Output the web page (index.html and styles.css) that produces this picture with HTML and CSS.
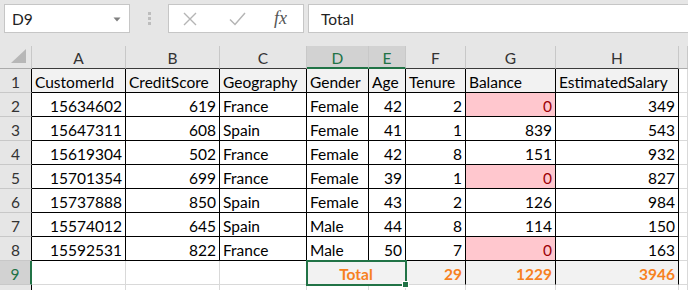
FILE: index.html
```html
<!DOCTYPE html>
<html lang="en">
<head>
    <meta charset="UTF-8">
    <title>Planilha</title>
    <link rel="stylesheet" href="styles.css">
</head>
<body>

    <!-- barra de fórmulas -->
    <div class="formula-bar">
        <div class="name-box">
            <span>D9</span>
            <svg width="8" height="5" viewBox="0 0 8 5"><path d="M0.5 0.5 L7.5 0.5 L4 4.5 Z" fill="#7f7f7f"/></svg>
        </div>
        <div class="grip"><i></i><i></i><i></i></div>
        <div class="fx-buttons">
            <svg class="icon-x" width="14" height="14" viewBox="0 0 14 14"><path d="M1 1 L13 13 M13 1 L1 13" stroke="#b5b5b5" stroke-width="1.4" fill="none"/></svg>
            <svg class="icon-ok" width="17" height="14" viewBox="0 0 17 14"><path d="M1 7.5 L6 12.5 L16 1" stroke="#b5b5b5" stroke-width="1.5" fill="none"/></svg>
            <span class="fx">fx</span>
        </div>
        <div class="formula-input">Total</div>
    </div>

    <!-- grade da planilha -->
    <div class="sheet">
        <div class="cell hdr corner"><svg width="16" height="15" viewBox="0 0 16 15"><path d="M15 0 L15 14 L0 14 Z" fill="#b7b7b7"/></svg></div>
        <div class="cell hdr top">A</div>
        <div class="cell hdr top">B</div>
        <div class="cell hdr top">C</div>
        <div class="cell hdr top sel-col">D</div>
        <div class="cell hdr top sel-col">E</div>
        <div class="cell hdr top">F</div>
        <div class="cell hdr top">G</div>
        <div class="cell hdr top">H</div>
        <div class="cell hdr"></div>

        <div class="cell rh">1</div>
        <div class="cell tb th1">CustomerId</div>
        <div class="cell tb th1">CreditScore</div>
        <div class="cell tb th1">Geography</div>
        <div class="cell tb th1">Gender</div>
        <div class="cell tb th1">Age</div>
        <div class="cell tb th1">Tenure</div>
        <div class="cell tb th1">Balance</div>
        <div class="cell tb th1">EstimatedSalary</div>
        <div class="cell"></div>

        <div class="cell rh">2</div>
        <div class="cell tb num">15634602</div>
        <div class="cell tb num">619</div>
        <div class="cell tb">France</div>
        <div class="cell tb">Female</div>
        <div class="cell tb num">42</div>
        <div class="cell tb num">2</div>
        <div class="cell tb num bad">0</div>
        <div class="cell tb num">349</div>
        <div class="cell"></div>

        <div class="cell rh">3</div>
        <div class="cell tb num">15647311</div>
        <div class="cell tb num">608</div>
        <div class="cell tb">Spain</div>
        <div class="cell tb">Female</div>
        <div class="cell tb num">41</div>
        <div class="cell tb num">1</div>
        <div class="cell tb num">839</div>
        <div class="cell tb num">543</div>
        <div class="cell"></div>

        <div class="cell rh">4</div>
        <div class="cell tb num">15619304</div>
        <div class="cell tb num">502</div>
        <div class="cell tb">France</div>
        <div class="cell tb">Female</div>
        <div class="cell tb num">42</div>
        <div class="cell tb num">8</div>
        <div class="cell tb num">151</div>
        <div class="cell tb num">932</div>
        <div class="cell"></div>

        <div class="cell rh">5</div>
        <div class="cell tb num">15701354</div>
        <div class="cell tb num">699</div>
        <div class="cell tb">France</div>
        <div class="cell tb">Female</div>
        <div class="cell tb num">39</div>
        <div class="cell tb num">1</div>
        <div class="cell tb num bad">0</div>
        <div class="cell tb num">827</div>
        <div class="cell"></div>

        <div class="cell rh">6</div>
        <div class="cell tb num">15737888</div>
        <div class="cell tb num">850</div>
        <div class="cell tb">Spain</div>
        <div class="cell tb">Female</div>
        <div class="cell tb num">43</div>
        <div class="cell tb num">2</div>
        <div class="cell tb num">126</div>
        <div class="cell tb num">984</div>
        <div class="cell"></div>

        <div class="cell rh">7</div>
        <div class="cell tb num">15574012</div>
        <div class="cell tb num">645</div>
        <div class="cell tb">Spain</div>
        <div class="cell tb">Male</div>
        <div class="cell tb num">44</div>
        <div class="cell tb num">8</div>
        <div class="cell tb num">114</div>
        <div class="cell tb num">150</div>
        <div class="cell"></div>

        <div class="cell rh">8</div>
        <div class="cell tb num">15592531</div>
        <div class="cell tb num">822</div>
        <div class="cell tb">France</div>
        <div class="cell tb">Male</div>
        <div class="cell tb num">50</div>
        <div class="cell tb num">7</div>
        <div class="cell tb num bad">0</div>
        <div class="cell tb num">163</div>
        <div class="cell"></div>

        <div class="cell rh sel-row">9</div>
        <div class="cell"></div>
        <div class="cell"></div>
        <div class="cell"></div>
        <div class="cell tot merged">Total</div>
        <div class="cell tot num edge">29</div>
        <div class="cell tot num edge">1229</div>
        <div class="cell tot num edge">3946</div>
        <div class="cell"></div>

        <!-- linha 10, só aparece o começo -->
        <div class="cell rh"></div>
        <div class="cell"></div>
        <div class="cell"></div>
        <div class="cell"></div>
        <div class="cell"></div>
        <div class="cell"></div>
        <div class="cell"></div>
        <div class="cell"></div>
        <div class="cell"></div>
        <div class="cell"></div>
    </div>

</body>
</html>
```

FILE: styles.css
```css
/* aparência de planilha do Excel */
body {
    margin: 0;
    height: 290px;
    overflow: hidden;
    background-color: #e6e6e6;
    font-family: Lato, "Liberation Sans", sans-serif;
    font-size: 15.5px;
    color: #000;
}

/* barra de fórmulas */
.formula-bar {
    display: flex;
    align-items: flex-start;
    height: 46px;
    padding: 4px 0 0 4px;
    box-sizing: border-box;
}
.name-box {
    width: 126px;
    height: 29px;
    box-sizing: border-box;
    background-color: #fff;
    border: 1px solid #c6c6c6;
    display: flex;
    align-items: center;
    justify-content: space-between;
    padding: 1px 8px 0 7px;
    color: #222;
}
.grip {
    width: 38px;
    display: flex;
    flex-direction: column;
    align-items: center;
    gap: 2px;
    padding-top: 8px;
}
.grip i {
    display: block;
    width: 3px;
    height: 3px;
    background-color: #bdbdbd;
}
.fx-buttons {
    width: 136px;
    height: 29px;
    box-sizing: border-box;
    background-color: #fff;
    border: 1px solid #c6c6c6;
    display: flex;
    align-items: center;
    padding-left: 14px;
}
.icon-x {
    margin-right: 32px;
}
.icon-ok {
    margin-right: 28px;
}
.fx {
    font-family: "Liberation Serif", serif;
    font-style: italic;
    font-size: 18px;
    color: #555;
}
.formula-input {
    flex: 1;
    height: 29px;
    margin-left: 4px;
    box-sizing: border-box;
    background-color: #fff;
    border: 1px solid #c6c6c6;
    border-right: none;
    padding: 1px 0 0 12px;
    line-height: 26px;
    color: #222;
}

/* grade */
.sheet {
    display: grid;
    grid-template-columns: 32px 94px 94px 87px 62px 37px 60px 90px 123px 1fr;
    grid-template-rows: 23px;
    grid-auto-rows: 24px;
    height: 244px;
    overflow: hidden;
}
.cell {
    box-sizing: border-box;
    border-right: 1px solid #d9d9d9;
    border-bottom: 1px solid #d9d9d9;
    background-color: #fff;
    padding: 3px 3px 0 3px;
    line-height: 20px;
    white-space: nowrap;
    overflow: hidden;
}
.num {
    text-align: right;
}

/* cabeçalhos de coluna e linha */
.hdr {
    background-color: #e6e6e6;
    border-right-color: #c8c8c8;
    border-bottom-color: #ababab;
    text-align: center;
    color: #333;
    padding-top: 2px;
}
.hdr.top {
    border-bottom-color: #3a3a3a;
}
.corner {
    display: flex;
    align-items: flex-end;
    justify-content: flex-end;
    padding: 0 4px 4px 0;
}
.sel-col {
    background-color: #d2d2d2;
    color: #217346;
    border-bottom: 2px solid #217346 !important;
}
.rh {
    background-color: #e6e6e6;
    border-right-color: #000;
    border-bottom-color: #c8c8c8;
    text-align: center;
    color: #333;
}
.sel-row {
    background-color: #d2d2d2;
    color: #217346;
    border-right: 2px solid #217346;
}

/* tabela com bordas pretas */
.tb {
    border-right-color: #000;
    border-bottom-color: #000;
}
.th1 {
    background-color: #f2f2f2;
}
.bad {
    background-color: #ffc7ce;
    color: #9c0006;
}

/* linha de total */
.tot {
    background-color: #f2f2f2;
    color: #f7811f;
    font-weight: bold;
}
.edge {
    border-right-color: #000;
}
.merged {
    grid-column: span 2;
    text-align: center;
    overflow: visible;
    position: relative;
    z-index: 1;
    outline: 2px solid #217346;
    outline-offset: -1px;
}
.merged::after {
    content: "";
    position: absolute;
    right: -4px;
    bottom: -4px;
    width: 5px;
    height: 5px;
    background-color: #217346;
    border: 1px solid #fff;
}
```
